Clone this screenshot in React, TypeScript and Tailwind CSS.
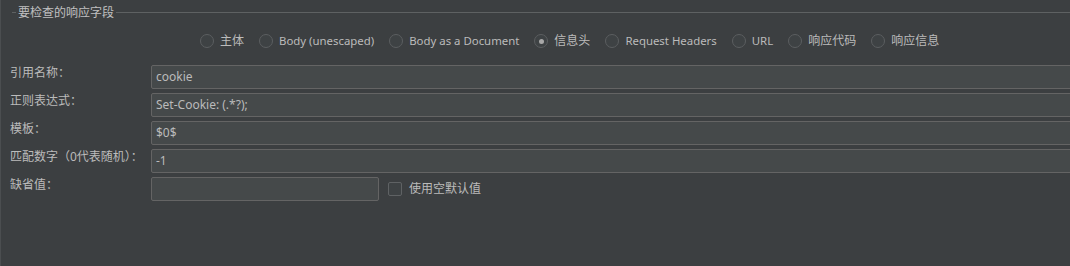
import React from "react";

const radios = [
  { label: "主体", checked: false, latin: false },
  { label: "Body (unescaped)", checked: false, latin: true },
  { label: "Body as a Document", checked: false, latin: true },
  { label: "信息头", checked: true, latin: false },
  { label: "Request Headers", checked: false, latin: true },
  { label: "URL", checked: false, latin: true },
  { label: "响应代码", checked: false, latin: false },
  { label: "响应信息", checked: false, latin: false },
];

const rows = [
  { label: "引用名称：", value: "cookie" },
  { label: "正则表达式：", value: "Set-Cookie: (.*?);" },
  { label: "模板：", value: "$0$" },
  { label: "匹配数字（0代表随机）：", value: "-1" },
];

function Radio({ label, checked, latin }: { label: string; checked: boolean; latin: boolean }) {
  return (
    <div className="flex items-center gap-[6px]">
      <span className="flex h-[14px] w-[14px] items-center justify-center rounded-full border border-[#5b5e60] bg-[#3e4244]">
        {checked && <span className="h-[5px] w-[5px] rounded-full bg-[#a8a8a8]" />}
      </span>
      <span className={latin ? "text-[11.4px] leading-[16px]" : "leading-[16px]"}>{label}</span>
    </div>
  );
}

export default function App() {
  return (
    <div
      className="relative h-[266px] w-[1070px] overflow-hidden border-l border-[#4b4e50] bg-[#3c3f41] text-[12px] text-[#bbbbbb]"
      style={{ fontFamily: '"Noto Sans", "Noto Sans CJK SC", sans-serif' }}
    >
      <div className="flex h-[25px] items-center pl-[11px]">
        <span className="h-px w-[4px] bg-[#5e6162]" />
        <span className="px-[2px] leading-[16px] text-[#c0c0c0]">要检查的响应字段</span>
        <span className="h-px flex-1 bg-[#5e6162]" />
      </div>
      <div className="mt-[8px] flex h-[16px] items-center gap-[15px] pl-[199px]">
        {radios.map((r) => (
          <Radio key={r.label} label={r.label} checked={r.checked} latin={r.latin} />
        ))}
      </div>
      <div className="mt-[16px] flex flex-col gap-[4px] pl-[9px]">
        {rows.map((r) => (
          <div key={r.label} className="flex items-start">
            <div className="w-[141px] shrink-0 leading-[16px]">{r.label}</div>
            <div className="flex h-[24px] w-[940px] shrink-0 items-center rounded-[2px] border border-[#646464] bg-[#45494a] pl-[4px] text-[#bbbbbb]">
              {r.value}
            </div>
          </div>
        ))}
        <div className="flex items-start">
          <div className="w-[141px] shrink-0 leading-[16px]">缺省值：</div>
          <div className="h-[24px] w-[228px] shrink-0 rounded-[2px] border border-[#646464] bg-[#45494a]" />
          <div className="ml-[9px] flex h-[24px] items-center gap-[7px]">
            <span className="h-[14px] w-[14px] rounded-[2px] border border-[#5f6264] bg-[#3e4244]" />
            <span className="leading-[16px]">使用空默认值</span>
          </div>
        </div>
      </div>
    </div>
  );
}
